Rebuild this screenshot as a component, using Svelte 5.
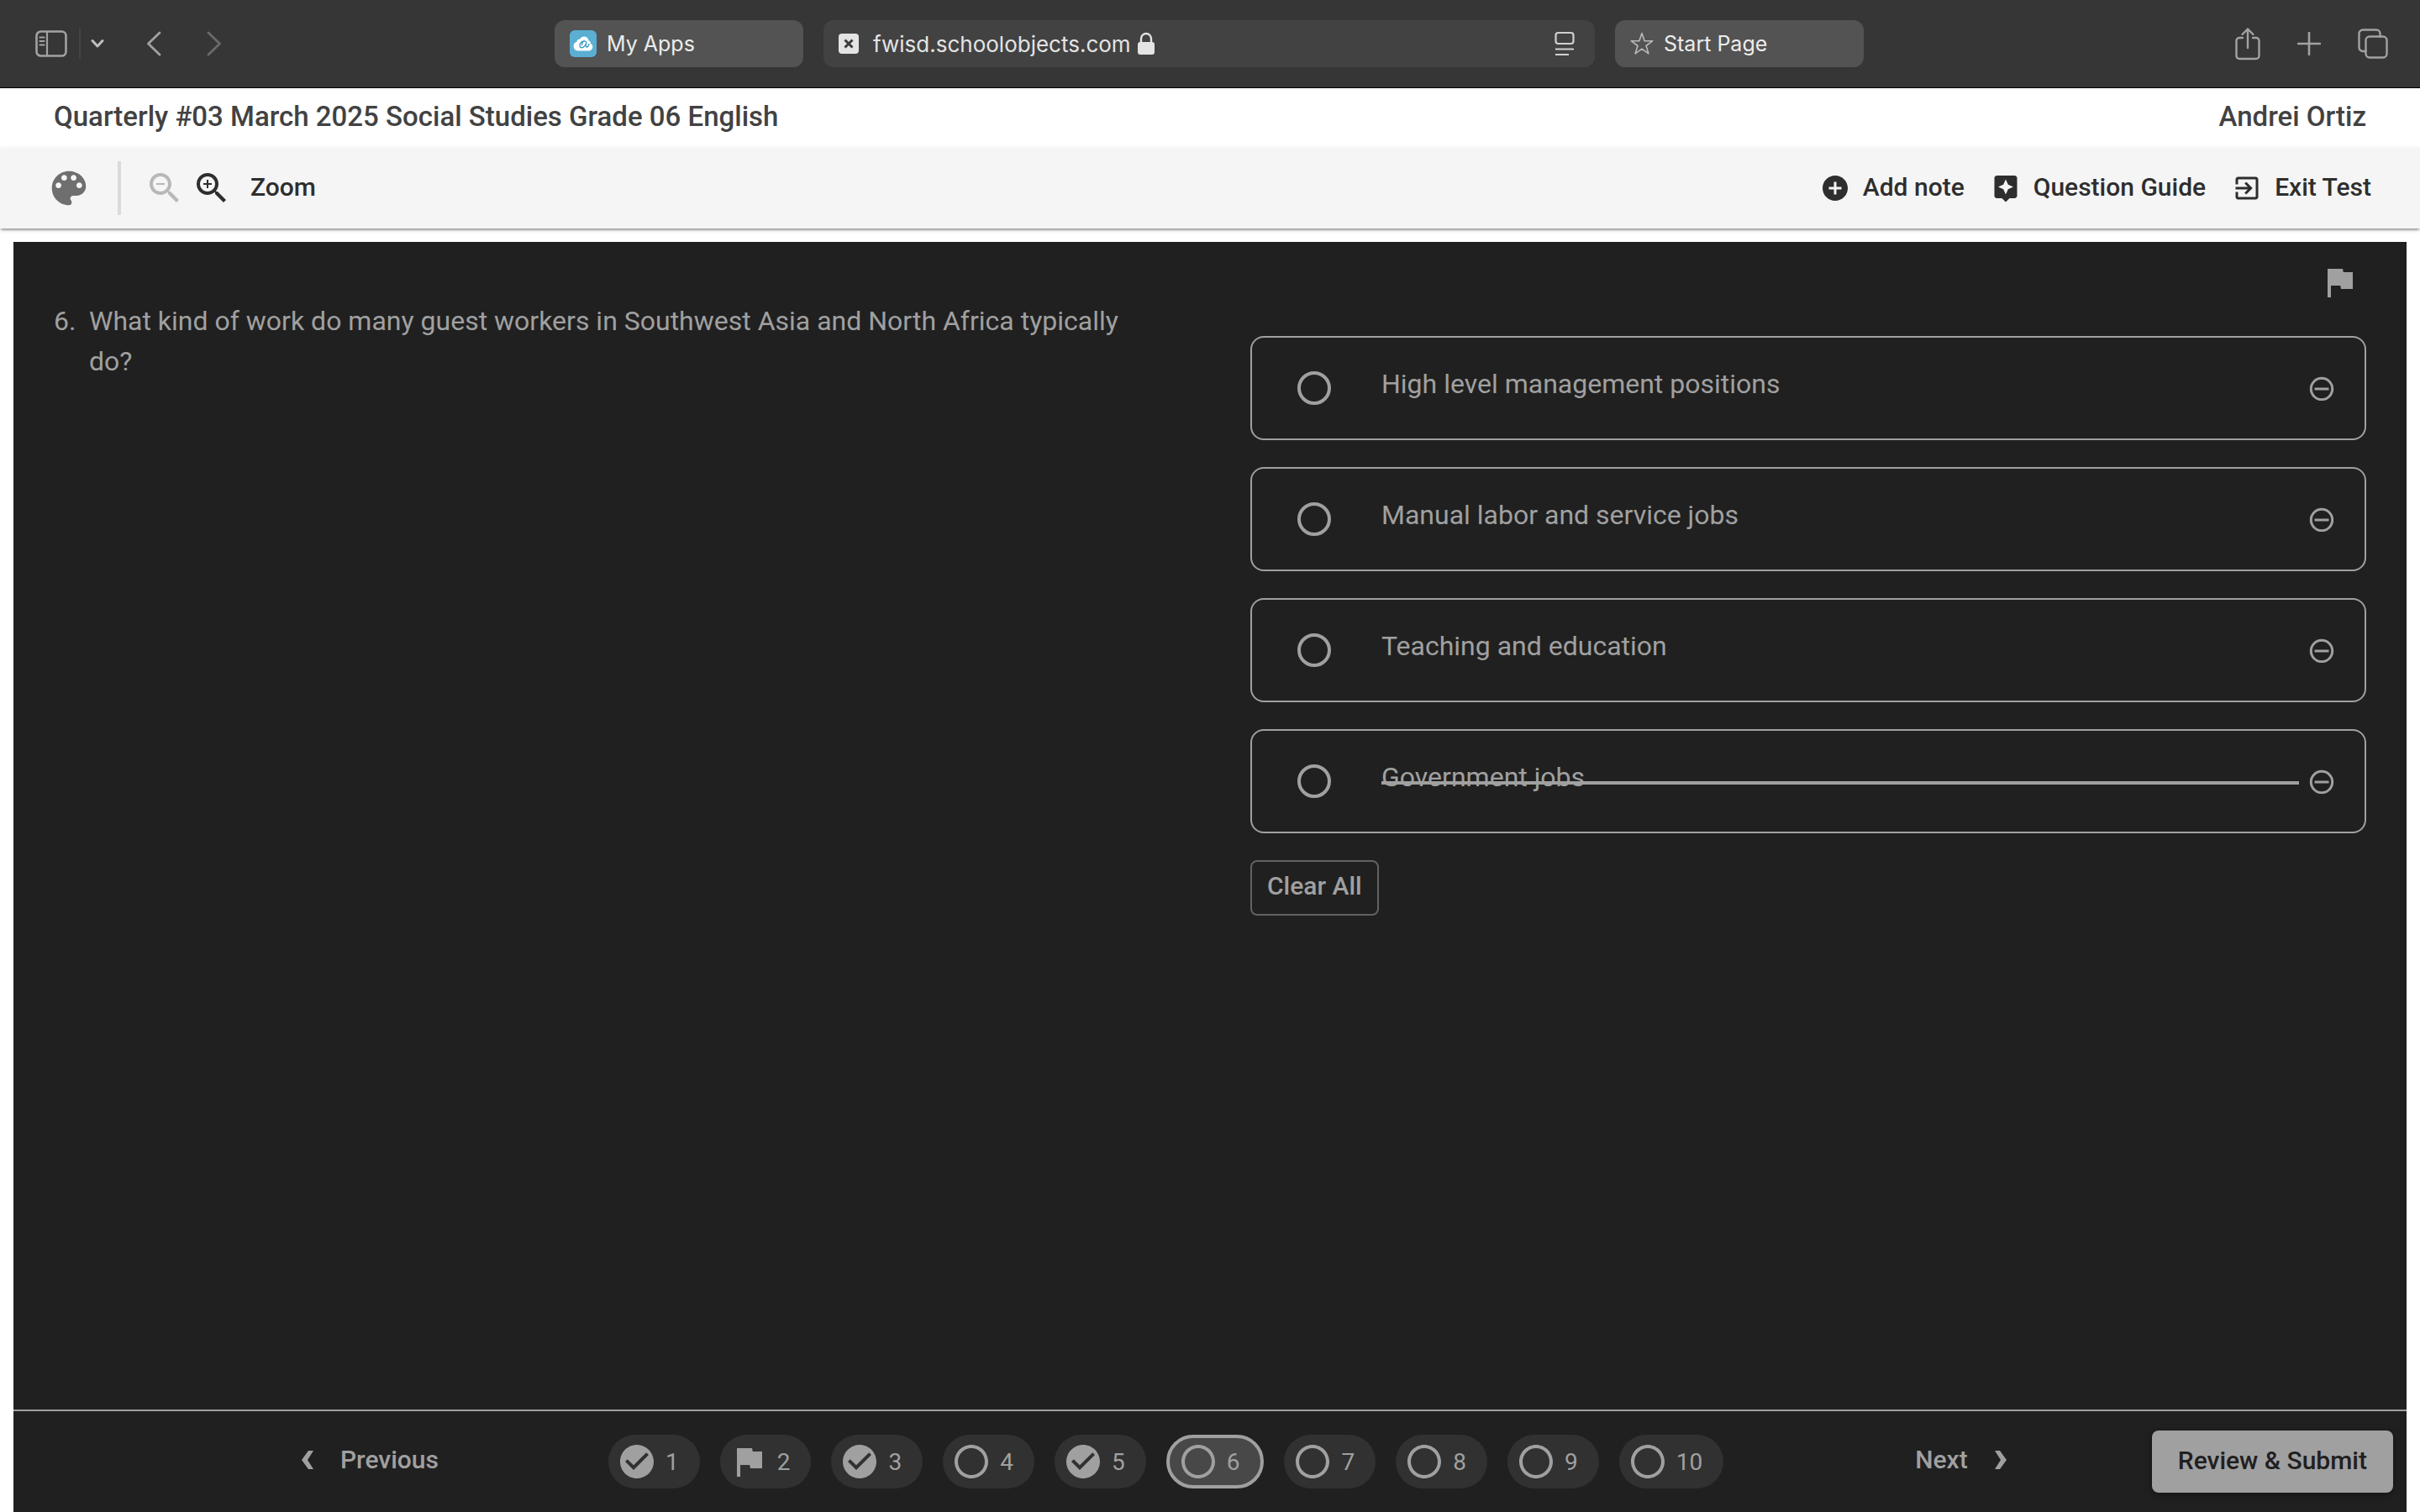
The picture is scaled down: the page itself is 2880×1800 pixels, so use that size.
<script>
  const options = [
    { id: 'a', text: 'High level management positions', eliminated: false },
    { id: 'b', text: 'Manual labor and service jobs', eliminated: false },
    { id: 'c', text: 'Teaching and education', eliminated: false },
    { id: 'd', text: 'Government jobs', eliminated: true }
  ];

  const steps = [
    { n: 1, state: 'done' },
    { n: 2, state: 'flagged' },
    { n: 3, state: 'done' },
    { n: 4, state: 'open' },
    { n: 5, state: 'done' },
    { n: 6, state: 'open' },
    { n: 7, state: 'open' },
    { n: 8, state: 'open' },
    { n: 9, state: 'open' },
    { n: 10, state: 'open' }
  ];

  const current = 6;

  // 24-unit glyphs
  const glyphs = {
    done: 'M12 2C6.48 2 2 6.48 2 12s4.48 10 10 10 10-4.48 10-10S17.52 2 12 2zm-2 15l-5-5 1.41-1.41L10 14.17l7.59-7.59L19 8l-9 9z',
    flagged: 'M14.4 6L14 4H5v17h2v-7h5.6l.4 2h7V6z',
    open: 'M12 2C6.48 2 2 6.48 2 12s4.48 10 10 10 10-4.48 10-10S17.52 2 12 2zm0 18c-4.42 0-8-3.58-8-8s3.58-8 8-8 8 3.58 8 8-3.58 8-8 8z',
    palette: 'M12 3c-4.97 0-9 4.03-9 9s4.03 9 9 9c.83 0 1.5-.67 1.5-1.5 0-.39-.15-.74-.39-1.01-.23-.26-.38-.61-.38-.99 0-.83.67-1.5 1.5-1.5H16c2.76 0 5-2.24 5-5 0-4.42-4.03-8-9-8zm-5.5 9c-.83 0-1.5-.67-1.5-1.5S5.67 9 6.5 9 8 9.67 8 10.5 7.33 12 6.5 12zm3-4C8.67 8 8 7.33 8 6.5S8.67 5 9.5 5s1.5.67 1.5 1.5S10.33 8 9.5 8zm5 0c-.83 0-1.5-.67-1.5-1.5S13.67 5 14.5 5s1.5.67 1.5 1.5S15.33 8 14.5 8zm3 4c-.83 0-1.5-.67-1.5-1.5S16.67 9 17.5 9s1.5.67 1.5 1.5-.67 1.5-1.5 1.5z',
    zoomOut: 'M15.5 14h-.79l-.28-.27C15.41 12.59 16 11.11 16 9.5 16 5.91 13.09 3 9.5 3S3 5.91 3 9.5 5.91 16 9.5 16c1.61 0 3.09-.59 4.23-1.57l.27.28v.79l5 4.99L20.49 19l-4.99-5zm-6 0C7.01 14 5 11.99 5 9.5S7.01 5 9.5 5 14 7.01 14 9.5 11.99 14 9.5 14zM7 9h5v1H7z',
    zoomIn: 'M15.5 14h-.79l-.28-.27C15.41 12.59 16 11.11 16 9.5 16 5.91 13.09 3 9.5 3S3 5.91 3 9.5 5.91 16 9.5 16c1.61 0 3.09-.59 4.23-1.57l.27.28v.79l5 4.99L20.49 19l-4.99-5zm-6 0C7.01 14 5 11.99 5 9.5S7.01 5 9.5 5 14 7.01 14 9.5 11.99 14 9.5 14zm2.5-4h-2v2H9v-2H7V9h2V7h1v2h2v1z',
    add: 'M12 2C6.48 2 2 6.48 2 12s4.48 10 10 10 10-4.48 10-10S17.52 2 12 2zm5 11h-4v4h-2v-4H7v-2h4V7h2v4h4v2z',
    guide: 'M19 2H5c-1.11 0-2 .9-2 2v14c0 1.1.89 2 2 2h4l3 3 3-3h4c1.1 0 2-.9 2-2V4c0-1.1-.9-2-2-2zm-5.12 10.88L12 17l-1.88-4.12L6 11l4.12-1.88L12 5l1.88 4.12L18 11l-4.12 1.88z',
    exit: 'M10.09 15.59L11.5 17l5-5-5-5-1.41 1.41L12.67 11H3v2h9.67l-2.58 2.59zM19 3H5c-1.11 0-2 .9-2 2v4h2V5h14v14H5v-4H3v4c0 1.1.89 2 2 2h14c1.1 0 2-.9 2-2V5c0-1.1-.9-2-2-2z'
  };
</script>

{#snippet glyph(name)}
  <svg class="glyph" viewBox="0 0 24 24" aria-hidden="true"><path d={glyphs[name]} /></svg>
{/snippet}

<div class="page">
  <nav class="browser" aria-label="Browser">
    <div class="side start">
      <button class="plain" aria-label="Sidebar">
        <svg class="line" width="38" height="32" viewBox="0 0 38 32">
          <rect x="1.5" y="1.5" width="35" height="29" rx="5" stroke-width="2.6" />
          <path d="M14 2v28M5.5 8.5h5M5.5 13h5M5.5 17.5h5" stroke-width="2.2" />
        </svg>
      </button>
      <span class="bar-divider"></span>
      <button class="plain tabs-menu" aria-label="Tab groups">
        <svg class="line" width="16" height="12" viewBox="0 0 16 12"><path d="M2 2.5l6 6.5 6-6.5" stroke-width="3" /></svg>
      </button>
      <button class="plain back" aria-label="Back">
        <svg class="line" width="18" height="30" viewBox="0 0 18 30"><path d="M16 2L2.5 15 16 28" stroke-width="2.8" /></svg>
      </button>
      <button class="plain forward" aria-label="Forward">
        <svg class="line" width="18" height="30" viewBox="0 0 18 30"><path d="M2 2l13.5 13L2 28" stroke-width="2.8" /></svg>
      </button>
    </div>
    <button class="tab">
      <svg width="32" height="32" viewBox="0 0 32 32" aria-hidden="true">
        <rect width="32" height="32" rx="6" fill="#5aafd3" />
        <path d="M10 24.5a5.5 5.5 0 0 1-1.7-10.7c.3-2 2-3.3 3.9-3.2 1-2 2.8-3.1 4.800-3.1 2.9 0 5.1 2 5.5 4.8 1.7.6 2.5 2 2.4 3.6 1.7.8 2.6 2.2 2.4 4-.2 2.7-2.1 4.600-4.800 4.600z" fill="#fff" />
        <path d="M19 13.5c-3.5-2-7.5 1.500-7 5 .4 3 4 3 6 .2 1-1.500 1.700-3.200 2-5.200-.8 3-1.500 6 0 6.500 1.500.3 2.800-1.700 3-4M14.500 18c0-2.500 1.500-5 3.500-5.500" fill="none" stroke="#3f9cc4" stroke-width="1.4" />
      </svg>
      <span>My Apps</span>
    </button>
    <div class="address">
      <button class="plain" aria-label="Site">
        <svg width="24" height="24" viewBox="0 0 24 24">
          <rect width="24" height="24" rx="4" fill="#e4e4e4" />
          <path d="M7.5 7.5l9 9M16.5 7.5l-9 9" stroke="#3c3c3c" stroke-width="3" />
        </svg>
      </button>
      <a class="url" href="#address">fwisd.schoolobjects.com</a>
      <svg width="20" height="28" viewBox="0 0 20 28" aria-hidden="true">
        <rect x="0" y="12" width="20" height="15" rx="3" fill="#e4e4e4" />
        <path d="M4 13V8a6 6 0 0 1 12 0v5" fill="none" stroke="#e4e4e4" stroke-width="2.4" />
      </svg>
      <button class="plain reader" aria-label="Reader">
        <svg width="24" height="30" viewBox="0 0 24 30" fill="none" stroke="#d0d0d0" stroke-width="2.2">
          <rect x="1.5" y="2" width="21" height="13" rx="3" />
          <path d="M1 21.5h22M1 28h16" />
        </svg>
      </button>
    </div>
    <button class="tab">
      <svg width="28" height="28" viewBox="0 0 28 28" fill="none" stroke="#b8b8b8" stroke-width="1.6" stroke-linejoin="round" aria-hidden="true">
        <path d="M14 1.5l3.100 9.200h9.700l-7.800 5.800 2.900 9.300L14 20.200l-7.900 5.600L9 16.500l-7.800-5.800h9.700z" />
      </svg>
      <span>Start Page</span>
    </button>
    <div class="side end">
      <button class="plain" aria-label="Share">
        <svg class="line" width="30" height="40" viewBox="0 0 30 40">
          <path d="M9 13H5a3.500 3.500 0 0 0-3.500 3.500v18A3.500 3.500 0 0 0 5 38h20a3.500 3.500 0 0 0 3.500-3.500v-18A3.500 3.500 0 0 0 25 13h-4M15 25V2.500M8.500 9L15 2.500 21.500 9" stroke-width="2.4" />
        </svg>
      </button>
      <button class="plain" aria-label="New tab">
        <svg class="line" width="28" height="28" viewBox="0 0 28 28"><path d="M14 1v26M1 14h26" stroke-width="2.6" /></svg>
      </button>
      <button class="plain" aria-label="Tab overview">
        <svg class="line" width="36" height="36" viewBox="0 0 36 36">
          <rect x="9.5" y="9.5" width="25" height="25" rx="4.5" stroke-width="2.4" />
          <path d="M9.500 27H6a4.500 4.500 0 0 1-4.500-4.500V6A4.500 4.500 0 0 1 6 1.500h16A4.500 4.500 0 0 1 26.500 6v3.500" stroke-width="2.4" />
        </svg>
      </button>
    </div>
  </nav>

  <header class="title">
    <h1>Quarterly #03 March 2025 Social Studies Grade 06 English</h1>
    <span>Andrei Ortiz</span>
  </header>

  <div class="toolbar">
    <div class="tools">
      <button class="plain palette" aria-label="Color theme">{@render glyph('palette')}</button>
      <span class="tool-divider"></span>
      <button class="plain zoom off" aria-label="Zoom out" disabled>{@render glyph('zoomOut')}</button>
      <button class="plain zoom" aria-label="Zoom in">{@render glyph('zoomIn')}</button>
      <span class="zoom-label">Zoom</span>
    </div>
    <div class="actions">
      <button class="action">{@render glyph('add')}<span>Add note</span></button>
      <button class="action">{@render glyph('guide')}<span>Question Guide</span></button>
      <button class="action">{@render glyph('exit')}<span>Exit Test</span></button>
    </div>
  </div>

  <div class="panel">
    <main class="content">
      <div class="question">
        <span>6.</span>
        <p>What kind of work do many guest workers in Southwest Asia and North Africa typically do?</p>
      </div>
      <div class="answers">
        <button class="plain flag" aria-label="Flag question">{@render glyph('flagged')}</button>
        <div class="options">
          {#each options as option}
            <div class="option">
              <input type="radio" name="answer" id="answer-{option.id}" value={option.id} />
              <label for="answer-{option.id}" class:struck={option.eliminated}>{option.text}</label>
              <button class="plain eliminate" aria-label="Eliminate {option.text}">
                <svg width="30" height="30" viewBox="0 0 30 30" fill="none" stroke="currentColor" stroke-width="3">
                  <circle cx="15" cy="16" r="12.7" />
                  <path d="M6.500 16h17" />
                </svg>
              </button>
            </div>
          {/each}
        </div>
        <button class="clear">Clear All</button>
      </div>
    </main>

    <footer>
      <button class="step prev">
        <svg width="14" height="22" viewBox="0 0 14 22" aria-hidden="true"><path d="M14 0H8L0 11l8 11h6L7 11z" /></svg>
        <span>Previous</span>
      </button>
      <nav class="pills" aria-label="Questions">
        {#each steps as step}
          <button class="pill" class:current={step.n === current}>
            {@render glyph(step.state)}<span>{step.n}</span>
          </button>
        {/each}
      </nav>
      <button class="step next">
        <span>Next</span>
        <svg width="14" height="22" viewBox="0 0 14 22" aria-hidden="true"><path d="M0 0h6l8 11-8 11H0l7-11z" /></svg>
      </button>
      <button class="submit">Review &amp; Submit</button>
    </footer>
  </div>
</div>

<style>
  :global(body) {
    margin: 0;
    background: #fff;
  }

  .page {
    box-sizing: border-box;
    min-height: 100vh;
    display: flex;
    flex-direction: column;
    font-family: Roboto, "Liberation Sans", sans-serif;
    background: #fff;
  }

  button {
    margin: 0;
    padding: 0;
    border: 0;
    background: none;
    color: inherit;
    font: inherit;
    cursor: pointer;
  }

  .plain {
    display: flex;
  }

  .glyph {
    display: block;
    flex: none;
    width: 48px;
    height: 48px;
    fill: currentColor;
  }

  /* browser chrome */
  .browser {
    display: grid;
    grid-template-columns: 1fr 296px minmax(0, 918px) 296px 1fr;
    gap: 24px;
    align-items: center;
    height: 104px;
    padding-right: 2px;
    border-bottom: 1px solid #000;
    background: #363636;
    color: #a2a2a2;
    font-family: Inter, "Liberation Sans", sans-serif;
    font-size: 25px;
  }

  .line {
    fill: none;
    stroke: currentColor;
    stroke-linecap: round;
    stroke-linejoin: round;
  }

  .side {
    display: flex;
    align-items: center;
  }

  .start {
    padding-left: 42px;
  }

  .end {
    justify-content: flex-end;
    gap: 44px;
    padding-right: 36px;
  }

  .bar-divider {
    width: 2px;
    height: 36px;
    margin: 0 12px 0 14px;
    background: #444;
  }

  .tabs-menu {
    color: #c0c0c0;
  }

  .back {
    margin-left: 50px;
  }

  .forward {
    margin-left: 54px;
    color: #6a6a6a;
  }

  .tab,
  .address {
    display: flex;
    align-items: center;
    height: 56px;
    border-radius: 12px;
  }

  .tab {
    gap: 12px;
    padding: 0 18px;
    background: #535353;
    color: #ececec;
  }

  .address {
    padding: 0 24px 0 18px;
    background: #424242;
    color: #e4e4e4;
    font-size: 26px;
  }

  .url {
    margin: 0 8px 0 17px;
    color: inherit;
    text-decoration: none;
  }

  .reader {
    margin-left: auto;
  }

  /* test header */
  .title {
    box-sizing: border-box;
    display: flex;
    align-items: center;
    justify-content: space-between;
    height: 71px;
    padding: 0 64px 4px;
    color: #424242;
    font-size: 33px;
    font-weight: 500;
    line-height: 40px;
  }

  h1 {
    margin: 0;
    font: inherit;
  }

  .toolbar {
    display: flex;
    align-items: center;
    justify-content: space-between;
    height: 96px;
    padding: 0 58px 0 55px;
    background: #f5f5f5;
    box-shadow: 0 4px 2px -2px rgba(0, 0, 0, 0.2), 0 2px 2px rgba(0, 0, 0, 0.14), 0 2px 6px rgba(0, 0, 0, 0.12);
    color: #2e2e2e;
    font-size: 30px;
    font-weight: 500;
  }

  .tools,
  .actions,
  .action {
    display: flex;
    align-items: center;
  }

  .action span,
  .zoom-label {
    padding-bottom: 4px;
  }

  .palette {
    color: #6f6f6f;
  }

  .palette .glyph {
    width: 54px;
    height: 54px;
  }

  .tool-divider {
    width: 4px;
    height: 64px;
    margin: 0 28px 0 31px;
    background: #dadada;
  }

  .zoom {
    margin-right: 8px;
  }

  .off {
    color: #b8b8b8;
  }

  .zoom-label {
    margin-left: 14px;
  }

  .actions {
    gap: 31px;
  }

  .action {
    gap: 15px;
  }

  .action .glyph {
    width: 36px;
    height: 36px;
  }

  /* question panel */
  .panel {
    flex: 1;
    display: flex;
    flex-direction: column;
    margin: 16px 16px 0;
    background: #202020;
    color: #a0a0a0;
  }

  .content {
    flex: 1;
    display: grid;
    grid-template-columns: minmax(0, 1fr) minmax(0, 1fr);
    gap: 96px;
    padding: 24px 48px;
    font-size: 32px;
    line-height: 48px;
  }

  .question {
    display: grid;
    grid-template-columns: 42px 1fr;
    align-content: start;
    padding: 46px 48px 0 0;
  }

  .question p {
    margin: 0;
  }

  .answers {
    display: flex;
    flex-direction: column;
    align-items: stretch;
  }

  .flag {
    align-self: flex-end;
    margin: 0 8px 40px 0;
  }

  .options {
    display: flex;
    flex-direction: column;
    gap: 32px;
  }

  .option {
    box-sizing: border-box;
    display: flex;
    align-items: center;
    min-height: 124px;
    padding: 0 36px 0 54px;
    border: 2px solid #a0a0a0;
    border-radius: 16px;
  }

  input {
    flex: none;
    box-sizing: border-box;
    appearance: none;
    width: 40px;
    height: 40px;
    margin: 0 60px 0 0;
    border: 4px solid #a0a0a0;
    border-radius: 50%;
  }

  input:checked {
    background: radial-gradient(#a0a0a0 45%, transparent 50%);
  }

  label {
    position: relative;
    flex: 1;
    margin-right: 12px;
    padding-bottom: 10px;
  }

  .struck::after {
    content: "";
    position: absolute;
    top: 50%;
    left: 0;
    right: 0;
    height: 4px;
    background: #a0a0a0;
  }

  .clear {
    align-self: flex-start;
    height: 66px;
    margin-top: 32px;
    padding: 0 18px 4px;
    border: 2px solid #616161;
    border-radius: 8px;
    font-size: 30px;
    font-weight: 500;
  }

  /* question navigation */
  footer {
    display: grid;
    grid-template-columns: 710fr auto 511fr auto;
    align-items: center;
    height: 120px;
    padding-right: 16px;
    border-top: 2px solid #a0a0a0;
    font-size: 30px;
    font-weight: 500;
  }

  .step {
    display: flex;
    align-items: center;
    padding-bottom: 4px;
    fill: currentColor;
  }

  .step,
  .submit {
    line-height: 36px;
  }

  .prev {
    justify-self: end;
    gap: 32px;
    margin-right: 202px;
  }

  .next {
    justify-self: start;
    gap: 32px;
    margin-left: 228px;
  }

  .pills {
    display: flex;
    gap: 24px;
  }

  .pill {
    display: flex;
    align-items: center;
    gap: 10px;
    height: 64px;
    padding: 0 25px 0 10px;
    border-radius: 32px;
    background: #313131;
    font-size: 28px;
    font-weight: 400;
  }

  .current {
    border: 4px solid #a0a0a0;
    background: #484848;
  }

  .submit {
    height: 74px;
    padding: 0 31px 3px;
    border-radius: 8px;
    background: #a0a0a0;
    box-shadow: 0 2px 8px rgba(0, 0, 0, 0.4);
    color: #202020;
  }
</style>
